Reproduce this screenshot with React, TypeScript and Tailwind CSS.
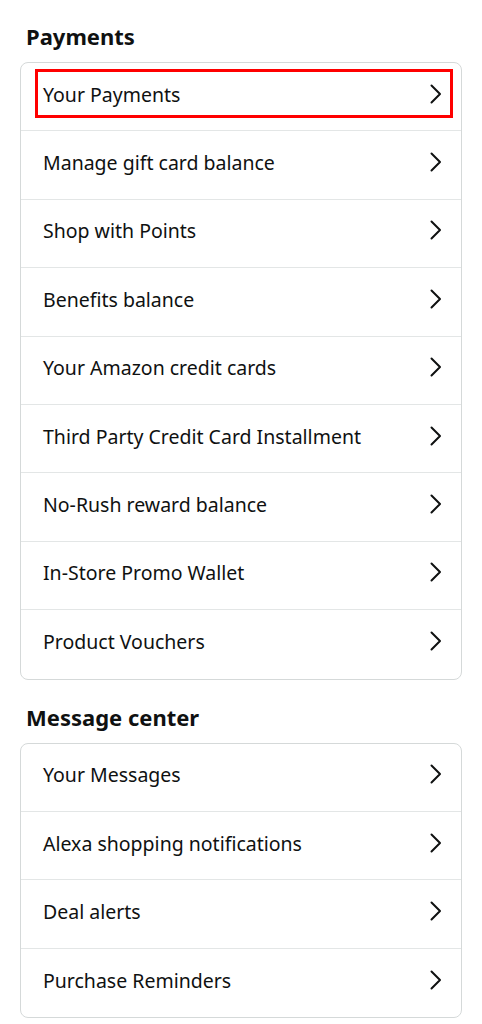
import React from 'react';

const payments = [
  'Your Payments',
  'Manage gift card balance',
  'Shop with Points',
  'Benefits balance',
  'Your Amazon credit cards',
  'Third Party Credit Card Installment',
  'No-Rush reward balance',
  'In-Store Promo Wallet',
  'Product Vouchers',
];

const messages = [
  'Your Messages',
  'Alexa shopping notifications',
  'Deal alerts',
  'Purchase Reminders',
];

const Chevron = () => (
  <svg width="12" height="20" viewBox="0 0 12 20" fill="none" className="shrink-0">
    <polyline
      points="1.5,1.5 10,10 1.5,18.5"
      stroke="#0f1111"
      strokeWidth="2"
      strokeLinecap="round"
      strokeLinejoin="round"
    />
  </svg>
);

const Row = ({ label, last, highlight }: { label: string; last: boolean; highlight?: boolean }) => (
  <div
    className={`relative flex h-[68.4px] items-center justify-between pb-[6px] pl-[22px] pr-[19px] ${
      last ? '' : 'border-b border-[#e3e6e6]'
    }`}
  >
    <span className="pt-[2px] text-[19.5px] leading-6 text-[#0f1111]">{label}</span>
    <Chevron />
    {highlight && (
      <div className="pointer-events-none absolute left-[14px] right-[8px] top-[6px] bottom-[12px] border-[3px] border-[#ff0000]" />
    )}
  </div>
);

const Section = ({ title, items, highlightFirst }: { title: string; items: string[]; highlightFirst?: boolean }) => (
  <section>
    <h2 className="mb-3 pl-1.5 text-[22px] font-bold leading-7 text-[#0f1111]">{title}</h2>
    <div className="overflow-hidden rounded-lg border border-[#d5d9d9] bg-white">
      {items.map((item, i) => (
        <Row key={item} label={item} last={i === items.length - 1} highlight={highlightFirst && i === 0} />
      ))}
    </div>
  </section>
);

export default function App() {
  return (
    <div
      className="min-h-screen bg-white px-5 pt-[22px]"
      style={{ fontFamily: '"Noto Sans", Arial, sans-serif' }}
    >
      <div className="flex flex-col gap-[23px]">
        <Section title="Payments" items={payments} highlightFirst />
        <Section title="Message center" items={messages} />
      </div>
    </div>
  );
}
